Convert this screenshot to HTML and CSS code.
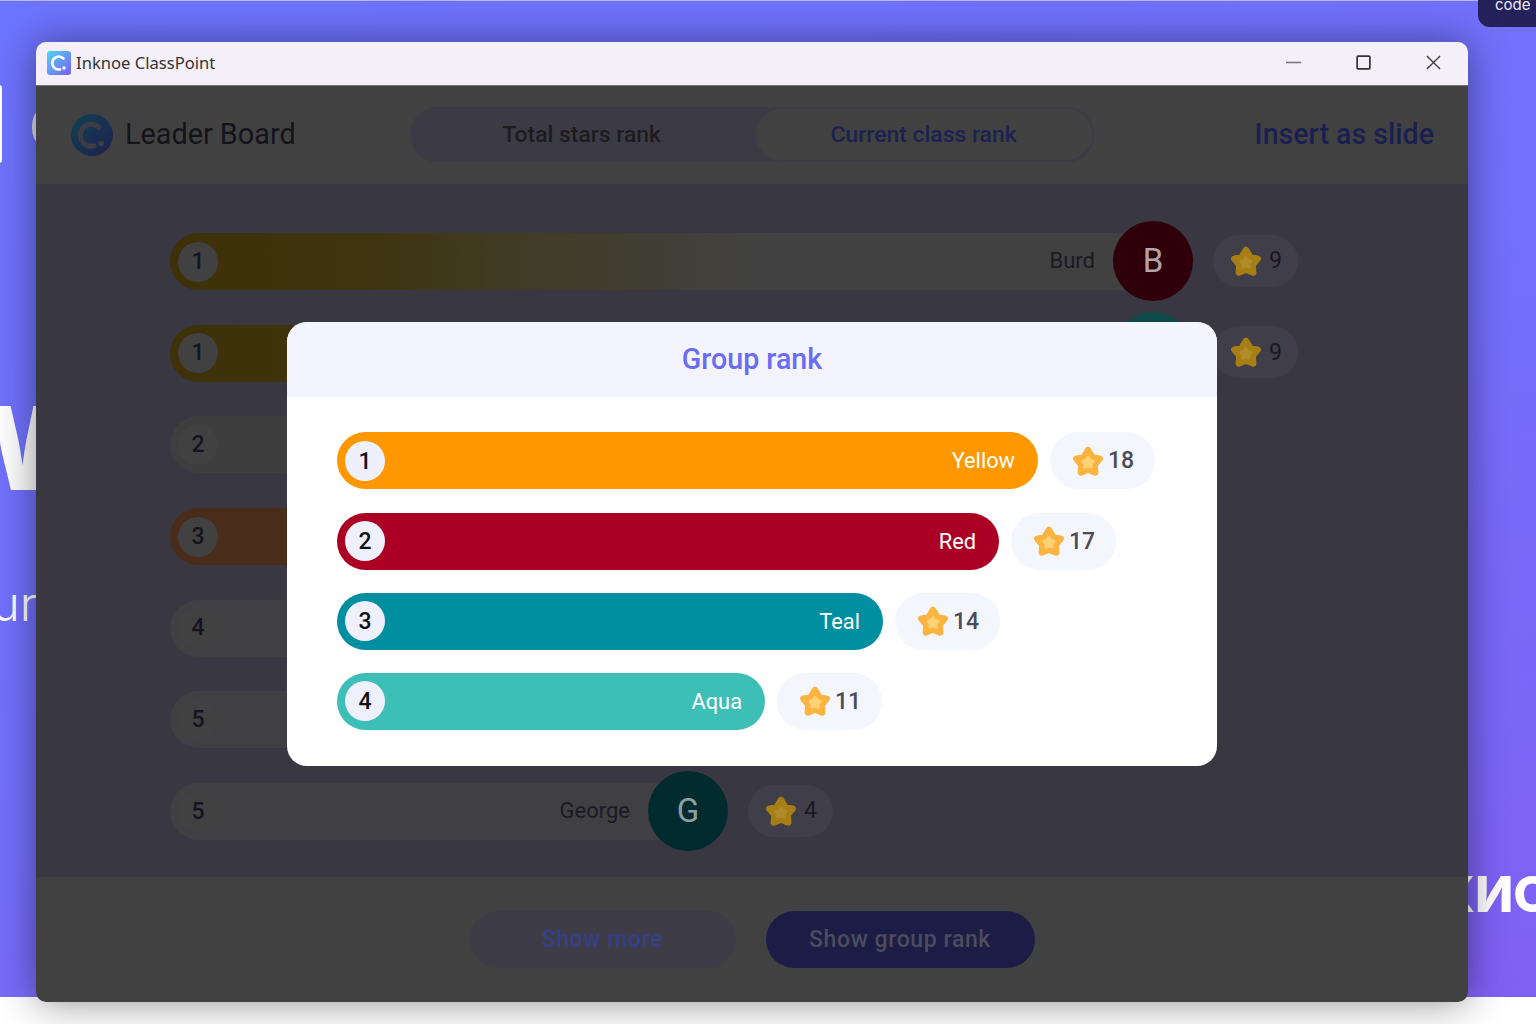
FILE: index.html
```html
<!DOCTYPE html>
<html lang="en">
<head>
    <meta charset="UTF-8">
    <title>Inknoe ClassPoint</title>
    <link rel="stylesheet" href="styles.css">
</head>
<body>
    <svg class="defs" width="0" height="0" aria-hidden="true">
        <symbol id="star" viewBox="0 0 24 24">
            <path class="star-out" d="M12 4.2 14.9 9 20.3 10.4 16.7 14.6 17.1 20.1 12 18 6.9 20.1 7.3 14.6 3.7 10.4 9.1 9Z"/>
            <path class="star-in" d="M12 9.5 13.3 11.6 15.7 12.2 14.1 14 14.3 16.4 12 15.5 9.7 16.4 9.9 14 8.3 12.2 10.7 11.6Z"/>
        </symbol>
    </svg>

    <div class="stage">
        <div class="bg-bar"></div>
        <div class="bg-blob"></div>
        <div class="bg-text bg-w">W</div>
        <div class="bg-text bg-ur">our</div>
        <div class="bg-text bg-kno">КИО</div>
        <div class="code-tab">code</div>

        <div class="window">
            <div class="titlebar">
                <svg class="app-icon" viewBox="0 0 24 24">
                    <defs>
                        <linearGradient id="appgrad" x1="0" y1="0" x2="1" y2="1">
                            <stop offset="0" stop-color="#4fd6f5"/>
                            <stop offset="1" stop-color="#7a5cf5"/>
                        </linearGradient>
                    </defs>
                    <rect width="24" height="24" rx="3" fill="url(#appgrad)"/>
                    <path d="M16.5 7.6A6.5 6.5 0 1 0 13 18.4" fill="none" stroke="#fff" stroke-width="2.6" stroke-linecap="round"/>
                    <circle cx="17" cy="17" r="1.7" fill="#fff"/>
                </svg>
                <span class="app-name">Inknoe ClassPoint</span>
                <div class="controls">
                    <svg viewBox="0 0 16 16"><path d="M0 8H16" stroke="#77757a" stroke-width="1.4"/></svg>
                    <svg viewBox="0 0 16 16"><rect x="1.2" y="1.2" width="13.6" height="13.6" rx="1" fill="none" stroke="#333" stroke-width="1.8"/></svg>
                    <svg viewBox="0 0 16 16"><path d="M1 1 15 15M15 1 1 15" stroke="#3a3a3a" stroke-width="1.4"/></svg>
                </div>
            </div>

            <div class="head">
                <svg class="head-logo" viewBox="0 0 42 42">
                    <defs>
                        <linearGradient id="headgrad" x1="0" y1="0" x2="1" y2="1">
                            <stop offset="0" stop-color="#0e4254"/>
                            <stop offset="1" stop-color="#21204d"/>
                        </linearGradient>
                    </defs>
                    <circle cx="21" cy="21" r="21" fill="url(#headgrad)"/>
                    <path d="M28 13.5A11 11 0 1 0 23 31.8" fill="none" stroke="#3b3d45" stroke-width="5" stroke-linecap="round"/>
                    <circle cx="30" cy="29.5" r="2.8" fill="#3b3d45"/>
                </svg>
                <h1 class="head-title">Leader Board</h1>
                <div class="tabs">
                    <div class="tab">Total stars rank</div>
                    <div class="tab tab-on">Current class rank</div>
                </div>
                <div class="insert">Insert as slide</div>
            </div>

            <div class="board">
                <div class="row">
                    <div class="track track-gold" style="width:983px">
                        <span class="num">1</span>
                        <span class="name">Burd</span>
                        <span class="avatar avatar-red">B</span>
                    </div>
                    <div class="score score-dim"><svg class="star"><use href="#star"/></svg>9</div>
                </div>
                <div class="row">
                    <div class="track track-gold" style="width:983px">
                        <span class="num">1</span>
                        <span class="avatar avatar-teal"></span>
                    </div>
                    <div class="score score-dim"><svg class="star"><use href="#star"/></svg>9</div>
                </div>
                <div class="row"><div class="track track-grey" style="width:600px"><span class="num">2</span></div></div>
                <div class="row"><div class="track track-rust" style="width:600px"><span class="num">3</span></div></div>
                <div class="row"><div class="track" style="width:600px"><span class="num">4</span></div></div>
                <div class="row"><div class="track" style="width:600px"><span class="num">5</span></div></div>
                <div class="row">
                    <div class="track" style="width:518px">
                        <span class="num">5</span>
                        <span class="name">George</span>
                        <span class="avatar avatar-green">G</span>
                    </div>
                    <div class="score score-dim"><svg class="star"><use href="#star"/></svg>4</div>
                </div>
            </div>

            <div class="foot">
                <div class="btn btn-more">Show more</div>
                <div class="btn btn-group">Show group rank</div>
            </div>

            <div class="modal">
                <div class="modal-head">Group rank</div>
                <div class="modal-list">
                    <div class="grow">
                        <div class="gbar gbar-yellow" style="width:701px"><span class="gnum">1</span><span class="glabel">Yellow</span></div>
                        <div class="score"><svg class="star"><use href="#star"/></svg>18</div>
                    </div>
                    <div class="grow">
                        <div class="gbar gbar-red" style="width:662px"><span class="gnum">2</span><span class="glabel">Red</span></div>
                        <div class="score"><svg class="star"><use href="#star"/></svg>17</div>
                    </div>
                    <div class="grow">
                        <div class="gbar gbar-teal" style="width:546px"><span class="gnum">3</span><span class="glabel">Teal</span></div>
                        <div class="score"><svg class="star"><use href="#star"/></svg>14</div>
                    </div>
                    <div class="grow">
                        <div class="gbar gbar-aqua" style="width:428px"><span class="gnum">4</span><span class="glabel">Aqua</span></div>
                        <div class="score"><svg class="star"><use href="#star"/></svg>11</div>
                    </div>
                </div>
            </div>
        </div>
    </div>
</body>
</html>
```

FILE: styles.css
```css
* {
    margin: 0;
    padding: 0;
    box-sizing: border-box;
}
html, body {
    height: 1024px;
    overflow: hidden;
}
body {
    position: relative;
    background: #fff;
    font-family: Roboto, "Liberation Sans", sans-serif;
}
.defs {
    position: absolute;
}

/* page behind the window */
.stage {
    position: relative;
    height: 997px;
    border-top: 1px solid #b9b7f5;
    background: linear-gradient(160deg, #6d74ff 0%, #7370fd 50%, #8060f5 100%);
}
.bg-bar {
    position: absolute;
    left: -6px;
    top: 84px;
    width: 8px;
    height: 78px;
    border-radius: 3px;
    background: #fff;
}
.bg-blob {
    position: absolute;
    left: 32px;
    top: 111px;
    width: 12px;
    height: 30px;
    border-radius: 50%;
    background: #dedee8;
}
.bg-text {
    position: absolute;
    color: #fff;
    font-family: Inter, "Liberation Sans", sans-serif;
    white-space: nowrap;
}
.bg-w {
    left: -63px;
    top: 378px;
    font-size: 115px;
    font-weight: 900;
    line-height: 140px;
}
.bg-ur {
    left: -37px;
    top: 574px;
    font-size: 48px;
    font-weight: 300;
    line-height: 58px;
}
.bg-kno {
    left: 1438px;
    top: 859px;
    font-size: 50px;
    font-weight: 800;
    line-height: 68px;
}
.code-tab {
    position: absolute;
    left: 1478px;
    top: -1px;
    width: 70px;
    height: 27px;
    padding-left: 17px;
    border-bottom-left-radius: 12px;
    background: #25215a;
    color: #ececf5;
    font-family: Inter, "Liberation Sans", sans-serif;
    font-size: 15px;
    line-height: 10px;
}

/* app window */
.window {
    position: absolute;
    left: 36px;
    top: 41px;
    display: flex;
    flex-direction: column;
    width: 1432px;
    height: 960px;
    overflow: hidden;
    border-radius: 10px;
    box-shadow: 0 0 40px rgba(0, 0, 0, 0.45);
}
.titlebar {
    display: flex;
    align-items: center;
    flex: none;
    height: 44px;
    padding: 0 0 2px 11px;
    background: #f5eff8;
    border-bottom: 1px solid #77757a;
}
.app-icon {
    width: 24px;
    height: 24px;
}
.app-name {
    margin-left: 5px;
    color: #333;
    font-family: "Noto Sans", sans-serif;
    font-size: 16.6px;
}
.controls {
    display: flex;
    gap: 55px;
    align-items: center;
    margin-left: auto;
    margin-right: 27px;
}
.controls svg {
    width: 15px;
    height: 15px;
}

.head {
    display: flex;
    align-items: center;
    flex: none;
    height: 98px;
    padding: 0 34px 2px 35px;
    background: #414141;
}
.head-logo {
    width: 42px;
    height: 42px;
    margin-top: 2px;
}
.head-title {
    margin-left: 12px;
    color: #15131a;
    font-size: 28.8px;
    font-weight: 400;
}
.tabs {
    display: flex;
    width: 684px;
    height: 55px;
    margin-left: 114px;
    border-radius: 28px;
    background: #3c3b45;
}
.tab {
    flex: 1;
    display: flex;
    align-items: center;
    justify-content: center;
    color: #1c1b20;
    font-size: 22.9px;
    font-weight: 500;
}
.tab-on {
    flex: none;
    width: 340px;
    border: 2px solid #3c3c44;
    border-radius: 28px;
    background: #414141;
    color: #1c2150;
}
.insert {
    margin-left: auto;
    color: #1b1f50;
    font-size: 28.6px;
    font-weight: 500;
}

.board {
    flex: 1;
    display: flex;
    flex-direction: column;
    gap: 34.7px;
    padding: 49px 0 0 134px;
    background: #393742;
}
.row {
    display: flex;
    align-items: center;
    height: 57px;
}
.track {
    display: flex;
    align-items: center;
    height: 57px;
    padding-left: 8px;
    border-radius: 29px 0 0 29px;
    background: #403f42;
}
.track-gold {
    background: linear-gradient(90deg, #3e3108 0%, #3e340e 20%, #403b22 33%, #414141 60%);
}
.track-grey {
    background: #3e3e3e;
}
.track-rust {
    background: #4a2c1a;
}
.num {
    flex: none;
    width: 40px;
    height: 40px;
    border-radius: 50%;
    background: #414141;
    color: #15141c;
    font-size: 23px;
    font-weight: 500;
    line-height: 40px;
    text-align: center;
}
.name {
    margin-left: auto;
    margin-right: 18px;
    margin-bottom: 3px;
    color: #1b1a22;
    font-size: 22px;
}
.avatar {
    flex: none;
    width: 80px;
    height: 80px;
    margin-top: -2px;
    margin-right: -40px;
    margin-left: auto;
    border-radius: 50%;
    font-size: 33px;
    line-height: 80px;
    text-align: center;
}
.name + .avatar {
    margin-left: 0;
}
.avatar-red {
    background: #2f0009;
    color: #b0a5a8;
}
.avatar-teal {
    background: #0e4a47;
}
.avatar-green {
    background: #022b2f;
    color: #8f9ea0;
}

/* star and score pill, used in the board and in the popup */
.star {
    flex: none;
    width: 34px;
    height: 34px;
}
.star-out {
    fill: var(--star-out);
    stroke: var(--star-out);
    stroke-width: 4.5;
    stroke-linejoin: round;
}
.star-in {
    fill: var(--star-in);
    stroke: var(--star-in);
    stroke-width: 2;
    stroke-linejoin: round;
}
.score {
    --star-out: #fbb440;
    --star-in: #ffd276;
    flex: none;
    display: flex;
    align-items: center;
    justify-content: center;
    gap: 3px;
    width: 105px;
    height: 57px;
    margin-left: 12px;
    border-radius: 29px;
    background: #f4f6fe;
    color: #4b4b57;
    font-size: 23px;
    font-weight: 500;
}
.score-dim {
    --star-out: #a67e14;
    --star-in: #b08c2a;
    gap: 6px;
    width: 85px;
    height: 52px;
    margin-top: -2px;
    margin-left: 60px;
    background: #403f49;
    color: #191822;
    font-weight: 400;
}

.foot {
    display: flex;
    flex: none;
    gap: 30px;
    align-items: center;
    justify-content: center;
    height: 125px;
    background: #414141;
}
.btn {
    display: flex;
    align-items: center;
    justify-content: center;
    height: 57px;
    border-radius: 29px;
    font-size: 23px;
    font-weight: 500;
    letter-spacing: 0.6px;
}
.btn-more {
    width: 266px;
    background: #3e3d47;
    color: #333f88;
}
.btn-group {
    width: 269px;
    background: #1b1d47;
    color: #4b4c5c;
}

/* popup over the dimmed window */
.modal {
    position: absolute;
    left: 251px;
    top: 280px;
    width: 930px;
    height: 444px;
    overflow: hidden;
    border-radius: 20px;
    background: #fff;
}
.modal-head {
    height: 75px;
    background: #f3f4fe;
    color: #6a6cf2;
    font-size: 28.6px;
    font-weight: 500;
    line-height: 75px;
    text-align: center;
}
.modal-list {
    display: flex;
    flex-direction: column;
    gap: 23.2px;
    padding: 35.4px 0 0 50px;
}
.grow {
    display: flex;
    align-items: center;
}
.gbar {
    display: flex;
    align-items: center;
    justify-content: space-between;
    height: 57px;
    padding: 0 23px 0 8px;
    border-radius: 29px;
    color: #fff;
    font-size: 21.8px;
}
.gbar-yellow {
    background: #ff9800;
}
.gbar-red {
    background: #ab0023;
}
.gbar-teal {
    background: #008fa1;
}
.gbar-aqua {
    background: #3dbeb6;
}
.gnum {
    width: 40px;
    height: 40px;
    border-radius: 50%;
    background: #eef0fd;
    color: #111;
    font-size: 23px;
    font-weight: 500;
    line-height: 42px;
    text-align: center;
}
```
